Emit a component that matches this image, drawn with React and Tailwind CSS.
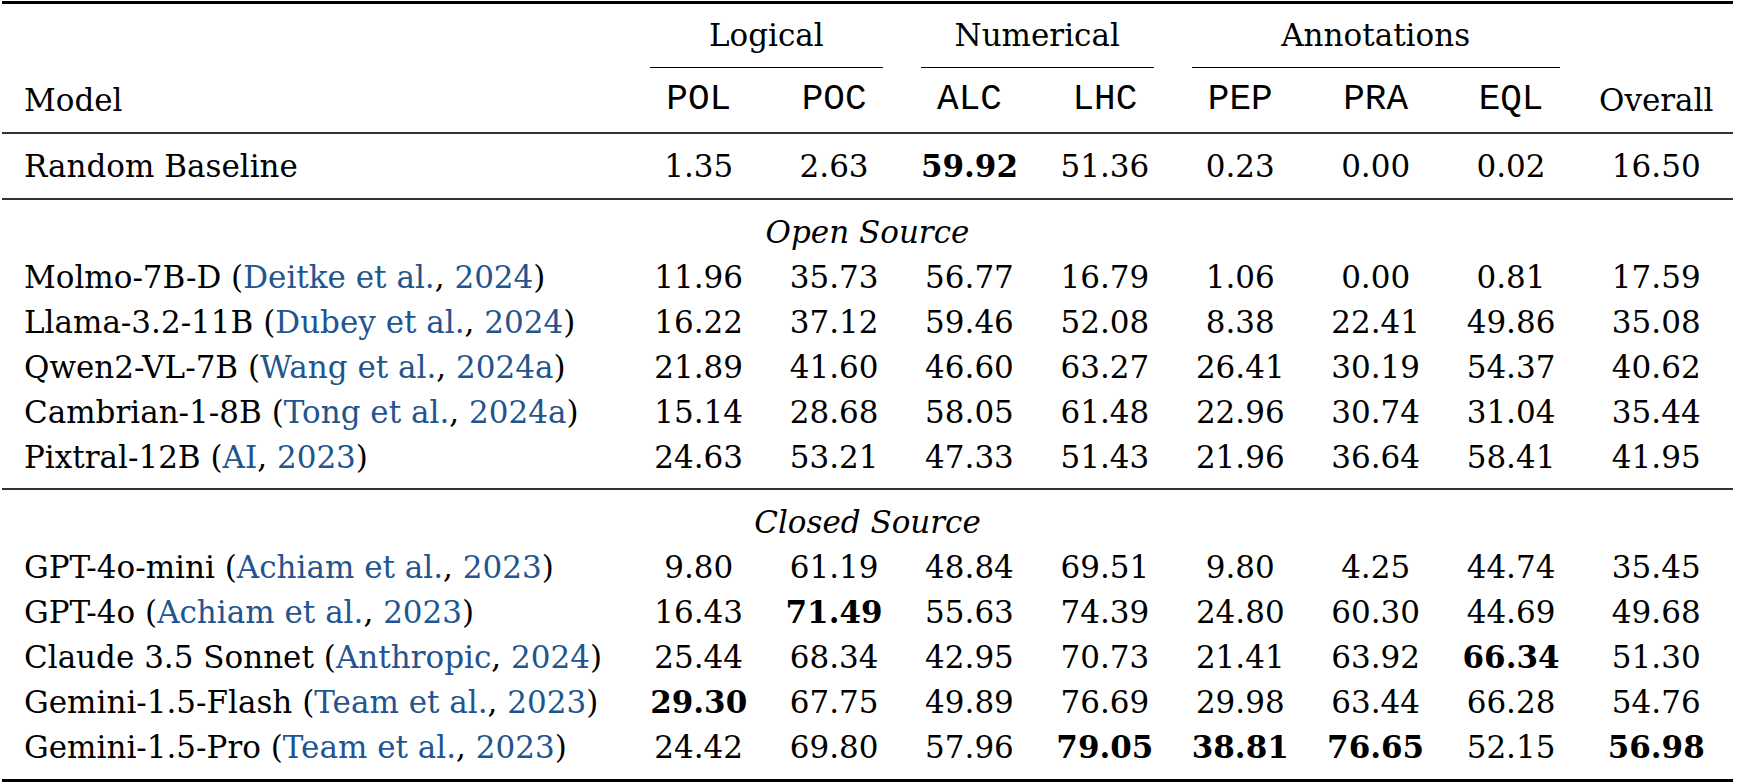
import React from 'react';

const cols = 'grid grid-cols-[629px_repeat(7,135.4px)_155px]';
const serif = "font-['DejaVu_Serif',serif]";
const mono = "font-['Liberation_Mono',monospace]";

const openRows = [
  { name: 'Molmo-7B-D', cite: ['Deitke et al.', '2024'], vals: ['11.96', '35.73', '56.77', '16.79', '1.06', '0.00', '0.81', '17.59'] },
  { name: 'Llama-3.2-11B', cite: ['Dubey et al.', '2024'], vals: ['16.22', '37.12', '59.46', '52.08', '8.38', '22.41', '49.86', '35.08'] },
  { name: 'Qwen2-VL-7B', cite: ['Wang et al.', '2024a'], vals: ['21.89', '41.60', '46.60', '63.27', '26.41', '30.19', '54.37', '40.62'] },
  { name: 'Cambrian-1-8B', cite: ['Tong et al.', '2024a'], vals: ['15.14', '28.68', '58.05', '61.48', '22.96', '30.74', '31.04', '35.44'] },
  { name: 'Pixtral-12B', cite: ['AI', '2023'], vals: ['24.63', '53.21', '47.33', '51.43', '21.96', '36.64', '58.41', '41.95'] },
];

const closedRows = [
  { name: 'GPT-4o-mini', cite: ['Achiam et al.', '2023'], vals: ['9.80', '61.19', '48.84', '69.51', '9.80', '4.25', '44.74', '35.45'] },
  { name: 'GPT-4o', cite: ['Achiam et al.', '2023'], vals: ['16.43', '71.49', '55.63', '74.39', '24.80', '60.30', '44.69', '49.68'], bold: [1] },
  { name: 'Claude 3.5 Sonnet', cite: ['Anthropic', '2024'], vals: ['25.44', '68.34', '42.95', '70.73', '21.41', '63.92', '66.34', '51.30'], bold: [6] },
  { name: 'Gemini-1.5-Flash', cite: ['Team et al.', '2023'], vals: ['29.30', '67.75', '49.89', '76.69', '29.98', '63.44', '66.28', '54.76'], bold: [0] },
  { name: 'Gemini-1.5-Pro', cite: ['Team et al.', '2023'], vals: ['24.42', '69.80', '57.96', '79.05', '38.81', '76.65', '52.15', '56.98'], bold: [3, 4, 5, 7] },
];

const Cells = ({ vals, bold = [] }) =>
  vals.map((v, i) => (
    <div key={i} className={`flex items-center justify-center ${bold.includes(i) ? 'font-bold' : ''}`}>
      {v}
    </div>
  ));

const ModelRow = ({ row }) => (
  <div className={`${cols} h-[45px]`}>
    <div className="flex items-center pl-[22px] whitespace-nowrap">
      {row.name}&nbsp;(<span className="text-[#22548f]">{row.cite[0]}</span>,&nbsp;
      <span className="text-[#22548f]">{row.cite[1]}</span>)
    </div>
    <Cells vals={row.vals} bold={row.bold} />
  </div>
);

const GroupLabel = ({ children }) => (
  <div className="h-[45px] flex items-center justify-center italic">{children}</div>
);

export default function App() {
  return (
    <div className={`bg-white w-[1738px] h-[784px] pt-[1px] pl-[2px] text-black ${serif} text-[31px] leading-none`}>
      <div className="w-[1731px]">
        <div className="h-[3px] bg-black" />

        {/* group headers with cmidrules */}
        <div className={`${cols} grid-rows-[63px_1px]`}>
          <div />
          <div className="col-span-2 flex items-center justify-center">Logical</div>
          <div className="col-span-2 flex items-center justify-center">Numerical</div>
          <div className="col-span-3 flex items-center justify-center">Annotations</div>
          <div />
          <div />
          <div className="col-span-2 mx-[19px] bg-black" />
          <div className="col-span-2 mx-[19px] bg-black" />
          <div className="col-span-3 mx-[19px] bg-black" />
          <div />
        </div>

        <div className={`${cols} h-[64px]`}>
          <div className="flex items-center pl-[22px]">Model</div>
          {['POL', 'POC', 'ALC', 'LHC', 'PEP', 'PRA', 'EQL'].map((h) => (
            <div key={h} className={`flex items-center justify-center ${mono} text-[36px]`}>
              {h}
            </div>
          ))}
          <div className="flex items-center justify-center">Overall</div>
        </div>

        <div className="h-[2px] bg-[#333]" />

        <div className={`${cols} h-[64px]`}>
          <div className="flex items-center pl-[22px]">Random Baseline</div>
          <Cells vals={['1.35', '2.63', '59.92', '51.36', '0.23', '0.00', '0.02', '16.50']} bold={[2]} />
        </div>

        <div className="h-[2px] bg-[#333]" />

        <div className="pt-[10px] pb-[8px]">
          <GroupLabel>Open Source</GroupLabel>
          {openRows.map((r) => (
            <ModelRow key={r.name} row={r} />
          ))}
        </div>

        <div className="h-[2px] bg-[#333]" />

        <div className="pt-[10px] pb-[9px]">
          <GroupLabel>Closed Source</GroupLabel>
          {closedRows.map((r) => (
            <ModelRow key={r.name} row={r} />
          ))}
        </div>

        <div className="h-[3px] bg-black" />
      </div>
    </div>
  );
}
